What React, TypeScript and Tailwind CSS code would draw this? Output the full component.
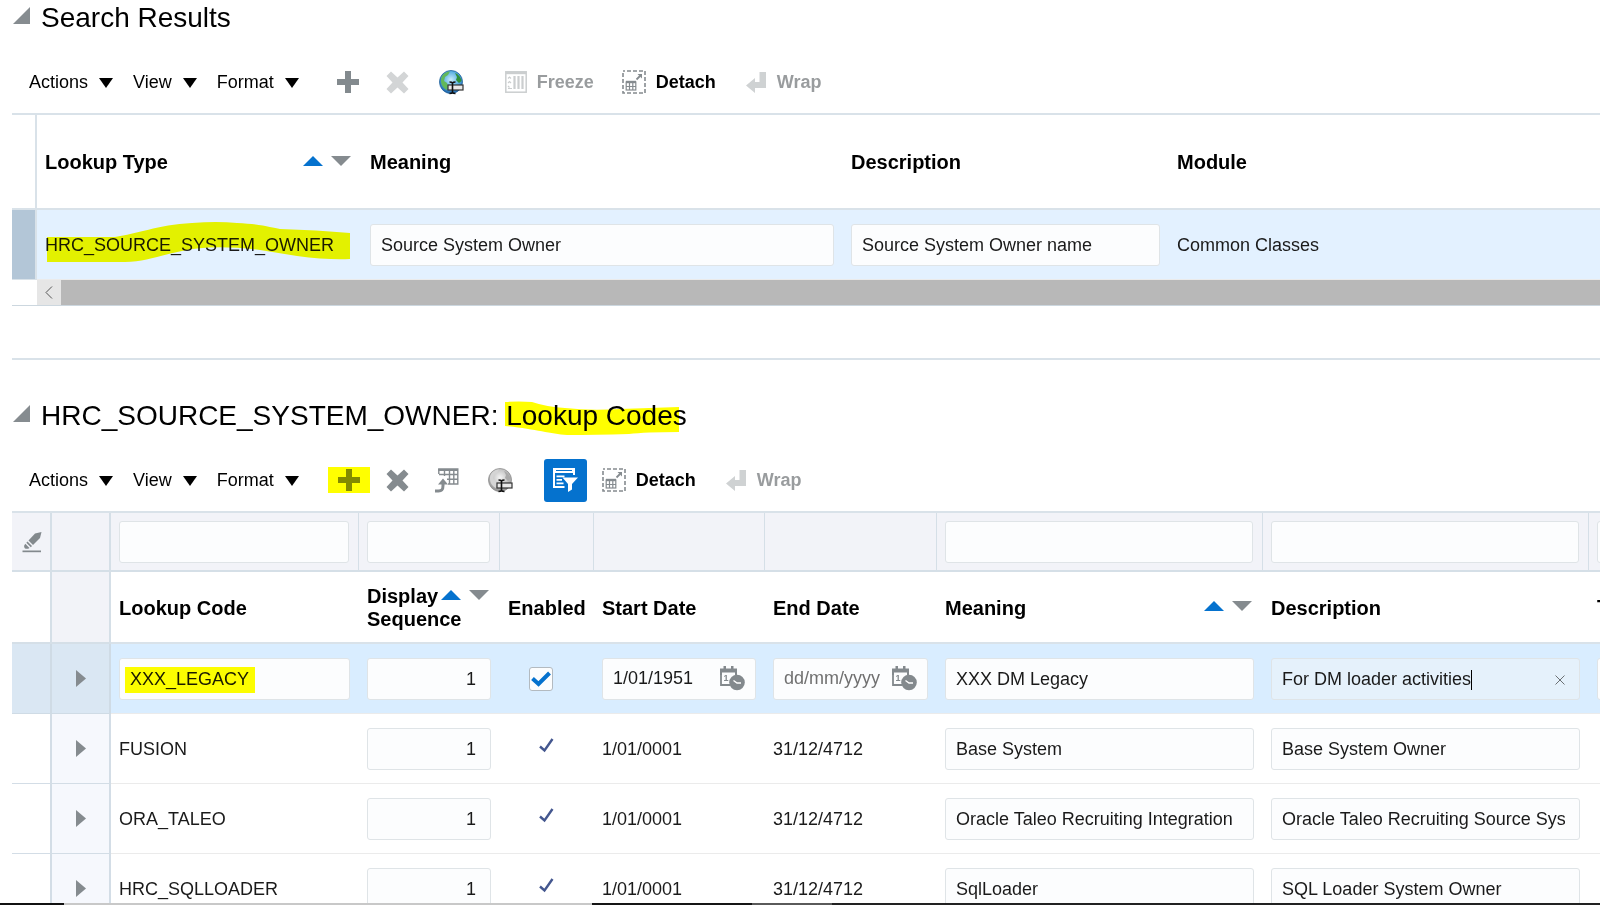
import React from "react";

type LookupRow = {
  code: string;
  sequence: string;
  startDate: string;
  endDate: string;
  meaning: string;
  description: string;
};

const rows: LookupRow[] = [
  {
    code: "FUSION",
    sequence: "1",
    startDate: "1/01/0001",
    endDate: "31/12/4712",
    meaning: "Base System",
    description: "Base System Owner",
  },
  {
    code: "ORA_TALEO",
    sequence: "1",
    startDate: "1/01/0001",
    endDate: "31/12/4712",
    meaning: "Oracle Taleo Recruiting Integration",
    description: "Oracle Taleo Recruiting Source System Owner",
  },
  {
    code: "HRC_SQLLOADER",
    sequence: "1",
    startDate: "1/01/0001",
    endDate: "31/12/4712",
    meaning: "SqlLoader",
    description: "SQL Loader System Owner",
  },
];

const inputClass =
  "block h-[42px] w-full rounded-[3px] border border-[#dfe4e7] bg-[#fcfdfe] pt-[2px] pr-[14px] pl-[10px] text-[18px] text-[#1a1a1a] outline-none";
const cellClass = "border-b border-[#ebebeb] pl-2 pr-[9px]";
const textCellClass = "border-b border-[#ebebeb] pt-[2px] pl-2 pr-[9px] text-[#1a1a1a]";
const headClass =
  "border-b-2 border-[#d9e2e9] pt-[2px] pl-2 pr-[9px] text-left text-[20px] leading-[23px] font-bold";
const filterClass = "border-b-2 border-r border-[#d5dfe7] pl-2 pr-[9px]";

function PlusIcon() {
  return (
    <svg width="22" height="22" viewBox="0 0 22 22" fill="#838a8e">
      <path d="M8 0h6v8h8v6h-8v8H8v-8H0V8h8z" />
    </svg>
  );
}

function CrossIcon({ color }: { color: string }) {
  return (
    <svg width="23" height="23" viewBox="0 0 23 23" fill={color}>
      <path d="M5 .5l6.500 6L18 .5 22.500 5l-6 6.500 6 6.500-4.500 4.500-6.500-6-6.500 6L.5 18l6-6.500L.5 5z" />
    </svg>
  );
}

function GlobeIcon({ gray = false }: { gray?: boolean }) {
  const id = gray ? "globe-gray" : "globe-color";
  return (
    <svg width="25" height="25" viewBox="0 0 25 25">
      <defs>
        <radialGradient id={id} cx="0.5" cy="0.4" r="0.6">
          <stop offset="0" stopColor={gray ? "#f4f4f4" : "#c9ecfb"} />
          <stop offset="0.6" stopColor={gray ? "#c4c4c4" : "#58aee0"} />
          <stop offset="1" stopColor={gray ? "#8b8b8b" : "#1a5fa8"} />
        </radialGradient>
      </defs>
      <circle cx="12" cy="12" r="11.500" fill={`url(#${id})`} stroke={gray ? "#8f8f8f" : "#23639c"} strokeWidth="0.8" />
      <path
        d="M3 6C5 3 8 1.500 11 1.500L9 5 6 7l-1 4 3 2 1 3-1 4C4 18 1.500 14 2 9z"
        fill={gray ? "#d5d5d5" : "#62b85a"}
      />
      <path d="M16 3c3 1 6 4 6.500 8L20 13l-3-3 1-3z" fill={gray ? "#a9a9a9" : "#2f9038"} />
      <rect x="9" y="15" width="15" height="5" fill="#e9e9e9" stroke="#333" strokeWidth="1.200" />
      <path
        d="M10.500 12c1.500 0 2.500.3 3 1 .5-.7 1.500-1 3-1M13.500 13v9.500M10.500 23.500c1.500 0 2.500-.3 3-1 .5.700 1.500 1 3 1"
        fill="none"
        stroke="#111"
        strokeWidth="1.600"
      />
    </svg>
  );
}

function FreezeIcon() {
  return (
    <svg width="22" height="22" viewBox="0 0 22 22" fill="none" stroke="#cbcecf">
      <rect x="0.8" y="0.8" width="20.400" height="20.400" strokeWidth="1.500" />
      <path d="M1 2h20" strokeWidth="2.400" />
      <path d="M9.500 5v13M13.500 5v13M17.500 5v13" strokeWidth="2.200" />
      <path d="M3 7.500L4.500 6 6 7.500M3 12l1.500-1.500L6 12M3 17.500h4M3 15l1.500 1.500" strokeWidth="1.200" />
    </svg>
  );
}

function DetachIcon() {
  return (
    <svg width="24" height="24" viewBox="0 0 24 24" fill="none" stroke="#858b8f">
      <rect x="1" y="1" width="22" height="22" strokeWidth="1.600" strokeDasharray="4 2" strokeDashoffset="2" />
      <rect x="4.200" y="12" width="9.600" height="8" strokeWidth="1.200" />
      <path d="M4 12h10" strokeWidth="2.400" />
      <path d="M4 16.500h10M7.500 12v8M10.800 12v8" strokeWidth="1.200" />
      <path d="M14.500 9.500l3.500-3.500" strokeWidth="1.800" />
      <path d="M15.500 4H20v4.500z" fill="#858b8f" stroke="none" />
    </svg>
  );
}

function WrapIcon() {
  return (
    <svg width="20" height="21" viewBox="0 0 20 21" fill="#cfd2d3">
      <path d="M13.500 0H20v16H9v5L0 13.500 9 6v4h4.500z" />
    </svg>
  );
}

function InsertRowsIcon() {
  return (
    <svg width="24" height="25" viewBox="0 0 24 25" fill="none" stroke="#858b8f">
      <path d="M3.800 6V1h19v15H13" strokeWidth="1.400" />
      <path d="M3 2h20" strokeWidth="2" />
      <path d="M4 6.500h19M12 11.300h11M9.500 2v6M14.500 2v14M18.800 2v14" strokeWidth="1.400" />
      <path d="M0 23h3.500c3.500 0 4.500-1.500 4.500-5.500v-1.500" strokeWidth="3" />
      <path d="M3 16.500L8 10.500l5 6z" fill="#858b8f" stroke="none" />
    </svg>
  );
}

function FilterRowsIcon() {
  return (
    <svg width="25" height="24" viewBox="0 0 25 24" fill="#fff">
      <path d="M0 0h22v7h-2V5H2v1H0z" />
      <path d="M0 0h2v20H0zM3.500 7.500h8v1.800h-8zM3.500 11h5.500v1.800H3.500zM3.500 14.500h7v1.800h-7zM0 18h11.500v2H0z" />
      <path d="M9.500 9.500H25l-6 6.500v5.500L15 24v-8z" />
      <path d="M3 2.500h16" stroke="#0572ce" strokeWidth="1" />
    </svg>
  );
}

function PencilIcon() {
  return (
    <svg width="20" height="22" viewBox="0 0 20 22" fill="#83898d">
      <path d="M13 2.500L19.500 1l-1.500 6-7 7-4.500-4.500z" />
      <path d="M5.500 10.500l4.500 4.500-1.200 1.200-4.500-4.500z" />
      <path d="M3.300 12.700l4.200 4.200c-1.500 1-3 1-4.500.5-1.500-1.500-1-3.200.3-4.700z" />
      <path d="M.5 19.500H19v1.700H.5z" />
    </svg>
  );
}

function CalendarIcon() {
  return (
    <svg width="25" height="25" viewBox="0 0 25 25">
      <path d="M1 3v16h9" fill="none" stroke="#83898d" strokeWidth="1.800" />
      <path d="M0 2.500h17V9h-2V6.500H2V9H0z" fill="#83898d" />
      <path d="M3.500 0h2.500v4H3.500zM11 0h2.500v4H11z" fill="#83898d" />
      <text x="3.500" y="15" fontSize="9" fontWeight="bold" fontFamily="Liberation Sans, sans-serif" fill="#83898d">
        1
      </text>
      <circle cx="17" cy="16.500" r="7.800" fill="#83898d" />
      <path d="M13.500 14.500l3.500 2.500h4" fill="none" stroke="#fff" strokeWidth="1.400" />
    </svg>
  );
}

function SortIcons() {
  return (
    <span className="flex shrink-0 gap-2 pr-[2px] pb-1">
      <button type="button" aria-label="Sort ascending">
        <svg width="20" height="10" viewBox="0 0 20 10">
          <path d="M10 0l10 10H0z" fill="#0572ce" />
        </svg>
      </button>
      <button type="button" aria-label="Sort descending">
        <svg width="20" height="10" viewBox="0 0 20 10">
          <path d="M0 0h20L10 10z" fill="#858b8f" />
        </svg>
      </button>
    </span>
  );
}

function MenuButton({ label }: { label: string }) {
  return (
    <button type="button" className="flex items-center gap-[11px]">
      {label}
      <svg width="14" height="10" viewBox="0 0 14 10" className="mt-[2px]">
        <path d="M0 0h14L7 10z" />
      </svg>
    </button>
  );
}

function Menus() {
  return (
    <div className="flex gap-5">
      <MenuButton label="Actions" />
      <MenuButton label="View" />
      <MenuButton label="Format" />
    </div>
  );
}

function SectionTitle({ children }: { children: React.ReactNode }) {
  return (
    <div className="flex h-8 items-start gap-[11px] pl-[13px]">
      <button type="button" aria-label="Collapse" className="mt-[7px]">
        <svg width="17" height="17" viewBox="0 0 17 17">
          <path d="M17 0v17H0z" fill="#868c90" />
        </svg>
      </button>
      <h2 className="pt-[2px] text-[28px] leading-8">{children}</h2>
    </div>
  );
}

function DetachAndWrap() {
  return (
    <>
      <button type="button" className="flex items-center gap-[10px] font-bold">
        <DetachIcon />
        Detach
      </button>
      <button type="button" disabled className="ml-[30px] flex items-center gap-[11px] font-bold text-[#999c9e]">
        <WrapIcon />
        Wrap
      </button>
    </>
  );
}

function DateInput({ label, value }: { label: string; value: string }) {
  return (
    <div className="flex h-[42px] items-center rounded-[3px] border border-[#dfe4e7] bg-[#fcfdfe] pr-[10px] pl-[10px]">
      <input
        aria-label={label}
        defaultValue={value}
        placeholder="dd/mm/yyyy"
        className="w-full min-w-0 flex-1 bg-transparent text-[18px] text-[#1a1a1a] outline-none placeholder:text-[#707070]"
      />
      <button type="button" aria-label={`Pick ${label}`}>
        <CalendarIcon />
      </button>
    </div>
  );
}

function ExpandButton() {
  return (
    <button type="button" aria-label="Expand row" className="mx-auto block">
      <svg width="10" height="17" viewBox="0 0 10 17">
        <path d="M0 0l10 8.500L0 17z" fill="#858b8f" />
      </svg>
    </button>
  );
}

function SearchResults() {
  return (
    <section>
      <SectionTitle>Search Results</SectionTitle>
      <div className="mt-[19px] flex h-[62px] items-center pl-[29px] text-[18px]">
        <Menus />
        <button type="button" aria-label="Add" className="ml-[38px]">
          <PlusIcon />
        </button>
        <button type="button" aria-label="Delete" disabled className="ml-[27px]">
          <CrossIcon color="#d3d5d6" />
        </button>
        <button type="button" aria-label="Translate" className="ml-[30px]">
          <GlobeIcon />
        </button>
        <button type="button" disabled className="mr-7 ml-[41px] flex items-center gap-[10px] font-bold text-[#999c9e]">
          <FreezeIcon />
          Freeze
        </button>
        <DetachAndWrap />
      </div>
      <div className="ml-3 overflow-hidden border-t-2 border-[#d9e2e9]">
        <table className="w-full table-fixed border-separate border-spacing-0 text-[18px]">
          <colgroup>
            <col className="w-[25px]" />
            <col className="w-[325px]" />
            <col className="w-[481px]" />
            <col className="w-[326px]" />
            <col />
          </colgroup>
          <thead>
            <tr className="h-[95px]">
              <td className="border-r-2 border-b-2 border-[#d9e2e9]" />
              <th className={headClass}>
                <div className="flex items-center justify-between">
                  Lookup Type
                  <SortIcons />
                </div>
              </th>
              <th className={headClass}>Meaning</th>
              <th className={headClass}>Description</th>
              <th className={headClass}>Module</th>
            </tr>
          </thead>
          <tbody>
            <tr className="h-[70px] bg-[#e3f1ff]">
              <td className="border-r-2 border-b border-[#d9e2e9] bg-[#b3c6d7]" />
              <td className={textCellClass}>
                <span className="relative">
                  HRC_SOURCE_SYSTEM_OWNER
                  <svg
                    width="304"
                    height="42"
                    viewBox="0 0 304 42"
                    className="pointer-events-none absolute -top-[13px] left-[2px] max-w-none mix-blend-multiply"
                  >
                    <path
                      d="M0 15H68C90 12 110 3 145 1Q170-1 190 1C215 2 225 6 233 7Q270 8 303 11V37Q280 38 250 34L213 28Q165 22 135 29C110 34 98 40 78 40H0z"
                      fill="#ffff00"
                    />
                  </svg>
                </span>
              </td>
              <td className={cellClass}>
                <input aria-label="Meaning" defaultValue="Source System Owner" className={inputClass} />
              </td>
              <td className={cellClass}>
                <input aria-label="Description" defaultValue="Source System Owner name" className={inputClass} />
              </td>
              <td className={textCellClass}>Common Classes</td>
            </tr>
          </tbody>
        </table>
        <div className="flex h-[26px] border-b border-[#ccd7df] pl-[25px]">
          <button type="button" aria-label="Scroll left" className="flex w-6 items-center justify-center bg-[#e6e6e6]">
            <svg width="8" height="13" viewBox="0 0 8 13" fill="none" stroke="#555">
              <path d="M7 .5l-6 6 6 6" />
            </svg>
          </button>
          <div className="flex-1 bg-[#b8b8b8]" />
        </div>
      </div>
    </section>
  );
}

function LookupCodes() {
  return (
    <section>
      <SectionTitle>
        HRC_SOURCE_SYSTEM_OWNER:{" "}
        <span className="relative">
          Lookup Codes
          <svg
            width="175"
            height="34"
            viewBox="0 0 175 34"
            className="pointer-events-none absolute top-px -left-px max-w-none mix-blend-multiply"
          >
            <path d="M0 1Q14 0 27 1Q42 6 60 7Q85 10 115 8L174 6V31Q140 31 124 33Q90 34 62 34C45 33 30 28 0 25z" fill="#ffff00" />
          </svg>
        </span>
      </SectionTitle>
      <div className="mt-[19px] flex h-[62px] items-center pl-[29px] text-[18px]">
        <Menus />
        <button
          type="button"
          aria-label="Add"
          className="ml-[29px] flex h-[26px] w-[42px] items-center justify-center bg-[#ffff00]"
        >
          <span className="mix-blend-multiply">
            <PlusIcon />
          </span>
        </button>
        <button type="button" aria-label="Delete" className="ml-4">
          <CrossIcon color="#858b8f" />
        </button>
        <button type="button" aria-label="Insert rows" className="ml-[26px]">
          <InsertRowsIcon />
        </button>
        <button type="button" aria-label="Translate" className="ml-[29px]">
          <GlobeIcon gray />
        </button>
        <button
          type="button"
          aria-label="Query by example"
          aria-pressed="true"
          className="mr-[15px] ml-[31px] flex h-[43px] w-[43px] items-center justify-center rounded-[3px] bg-[#0572ce]"
        >
          <FilterRowsIcon />
        </button>
        <DetachAndWrap />
      </div>
      <div className="ml-3 overflow-hidden border-t-2 border-[#d9e2e9]">
        <table className="w-full table-fixed border-separate border-spacing-0 text-[18px]">
          <colgroup>
            <col className="w-[40px]" />
            <col className="w-[59px]" />
            <col className="w-[248px]" />
            <col className="w-[141px]" />
            <col className="w-[94px]" />
            <col className="w-[171px]" />
            <col className="w-[172px]" />
            <col className="w-[326px]" />
            <col className="w-[326px]" />
            <col />
          </colgroup>
          <thead>
            <tr className="h-[59px] bg-[#f2f3f8]">
              <td className="border-r-2 border-b-2 border-[#d5dfe7] pl-[2px]">
                <button type="button" aria-label="Clear filters" className="mx-auto block">
                  <PencilIcon />
                </button>
              </td>
              <td className="border-r-2 border-b-2 border-[#d5dfe7]" />
              <td className={filterClass}>
                <input aria-label="Filter Lookup Code" className={inputClass} />
              </td>
              <td className={filterClass}>
                <input aria-label="Filter Display Sequence" className={inputClass} />
              </td>
              <td className={filterClass} />
              <td className={filterClass} />
              <td className={filterClass} />
              <td className={filterClass}>
                <input aria-label="Filter Meaning" className={inputClass} />
              </td>
              <td className={filterClass}>
                <input aria-label="Filter Description" className={inputClass} />
              </td>
              <td className="overflow-hidden border-b-2 border-[#d5dfe7] pl-2">
                <input aria-label="Filter Tag" className={inputClass} />
              </td>
            </tr>
            <tr className="h-[72px]">
              <td className="border-r-2 border-b-2 border-[#d5dfe7]" />
              <td className="border-r-2 border-b-2 border-[#d5dfe7] bg-[#f2f3f8]" />
              <th className={headClass}>Lookup Code</th>
              <th className={headClass}>
                <div className="flex items-start justify-between">
                  <span>
                    Display
                    <br />
                    Sequence
                  </span>
                  <span className="-ml-8 pt-[5px]">
                    <SortIcons />
                  </span>
                </div>
              </th>
              <th className={headClass}>Enabled</th>
              <th className={headClass}>Start Date</th>
              <th className={headClass}>End Date</th>
              <th className={headClass}>
                <div className="flex items-center justify-between">
                  Meaning
                  <SortIcons />
                </div>
              </th>
              <th className={headClass}>Description</th>
              <th className="overflow-hidden border-b-2 border-[#d9e2e9] pl-2 text-left text-[20px] font-bold">Tag</th>
            </tr>
          </thead>
          <tbody>
            <tr className="h-[70px] bg-[#d9edff]">
              <td className="border-r-2 border-b border-[#cfdbe5] bg-[#dae7f3]" />
              <td className="border-r-2 border-b border-[#cfdbe5] bg-[#dae7f3]">
                <ExpandButton />
              </td>
              <td className={cellClass}>
                <div className="relative">
                  <input aria-label="Lookup Code" defaultValue="XXX_LEGACY" className={inputClass} />
                  <div className="pointer-events-none absolute top-[9px] left-[6px] h-[26px] w-[130px] bg-[#ffff00] mix-blend-multiply" />
                </div>
              </td>
              <td className={cellClass}>
                <input aria-label="Display Sequence" defaultValue="1" className={`${inputClass} text-right`} />
              </td>
              <td className={cellClass}>
                <label className="relative mr-8 ml-auto block h-6 w-6">
                  <input
                    type="checkbox"
                    aria-label="Enabled"
                    defaultChecked
                    className="block h-6 w-6 appearance-none rounded-[3px] border border-[#b3bac0] bg-[#fcfdfe]"
                  />
                  <svg
                    width="20"
                    height="16"
                    viewBox="0 0 20 16"
                    className="pointer-events-none absolute top-1 left-[2px]"
                    fill="none"
                    stroke="#0572ce"
                    strokeWidth="4"
                  >
                    <path d="M1.500 7.500l6 5.500L18.500 2" />
                  </svg>
                </label>
              </td>
              <td className={cellClass}>
                <DateInput label="Start Date" value="1/01/1951" />
              </td>
              <td className={cellClass}>
                <DateInput label="End Date" value="" />
              </td>
              <td className={cellClass}>
                <input aria-label="Meaning" defaultValue="XXX DM Legacy" className={inputClass} />
              </td>
              <td className={cellClass}>
                <div className="flex h-[42px] items-center rounded-[3px] border border-[#dfe4e7] bg-[#e5f1fb] pt-[2px] pr-[14px] pl-[10px] text-[#1a1a1a]">
                  <input
                    aria-label="Description"
                    defaultValue="For DM loader activities"
                    className="field-sizing-content min-w-0 bg-transparent text-[18px] outline-none"
                  />
                  {/* text caret */}
                  <span className="h-5 w-px bg-black" />
                  <button type="button" aria-label="Clear" className="ml-auto">
                    <svg width="10" height="10" viewBox="0 0 10 10" stroke="#6b7073">
                      <path d="M.5.5l9 9M9.500.5l-9 9" />
                    </svg>
                  </button>
                </div>
              </td>
              <td className="overflow-hidden border-b border-[#ebebeb] pl-2">
                <input aria-label="Tag" className={inputClass} />
              </td>
            </tr>
            {rows.map((row) => (
              <tr key={row.code} className="h-[70px]">
                <td className="border-r-2 border-b border-[#d3dde6]" />
                <td className="border-r-2 border-b border-[#d3dde6] bg-[#f6f8fd]">
                  <ExpandButton />
                </td>
                <td className={textCellClass}>{row.code}</td>
                <td className={cellClass}>
                  <input aria-label="Display Sequence" defaultValue={row.sequence} className={`${inputClass} text-right`} />
                </td>
                <td className={cellClass}>
                  <svg
                    width="15"
                    height="15"
                    viewBox="0 0 15 15"
                    className="mx-auto mb-[6px]"
                    fill="none"
                    stroke="#44578f"
                    strokeWidth="2.400"
                    role="img"
                    aria-label="Enabled"
                  >
                    <path d="M1 8.500l4.500 4L13.500 1" />
                  </svg>
                </td>
                <td className={textCellClass}>{row.startDate}</td>
                <td className={textCellClass}>{row.endDate}</td>
                <td className={cellClass}>
                  <input aria-label="Meaning" defaultValue={row.meaning} className={inputClass} />
                </td>
                <td className={cellClass}>
                  <input aria-label="Description" defaultValue={row.description} className={inputClass} />
                </td>
                <td className="border-b border-[#ebebeb]" />
              </tr>
            ))}
          </tbody>
        </table>
      </div>
    </section>
  );
}

export default function App() {
  return (
    <div className="flex h-screen flex-col overflow-hidden bg-white font-['Liberation_Sans',Arial,sans-serif] text-black">
      <main className="min-h-0 flex-1 overflow-hidden">
        <SearchResults />
        <hr className="mt-[52px] mb-[38px] ml-3 border-t-2 border-[#d9e2e9]" />
        <LookupCodes />
      </main>
      <footer className="flex h-[2px] shrink-0 bg-[#222222]">
        <div className="w-[4%] bg-[#111111]" />
        <div className="w-[33%] bg-[#c8c8c8]" />
        <div className="w-[10%] bg-[#151515]" />
        <div className="w-[5%] bg-[#5a5a5a]" />
      </footer>
    </div>
  );
}
